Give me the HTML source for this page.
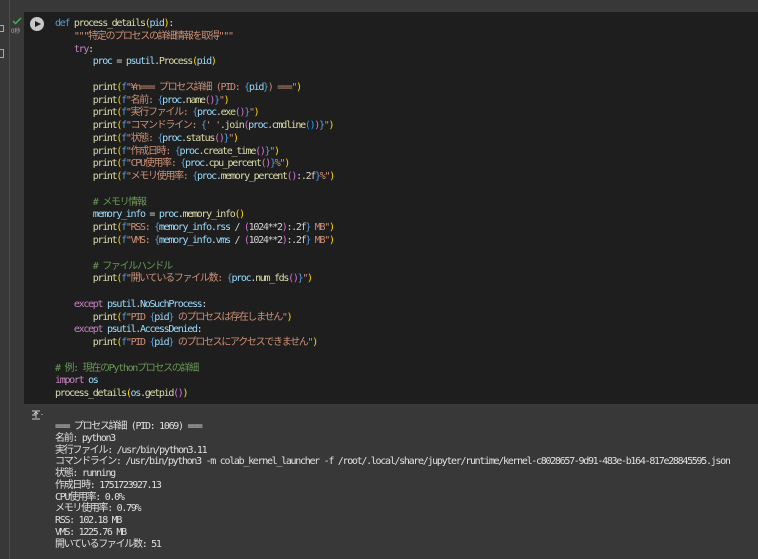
<!DOCTYPE html>
<html><head><meta charset="utf-8"><style>
body{margin:0;width:758px;height:559px;background:#383838;overflow:hidden;position:relative;font-family:"Liberation Mono","Noto Sans CJK JP",monospace;}
.gut{position:absolute;left:9px;top:0;width:1px;height:559px;background:#4d4d4d}
.cell{position:absolute;left:24px;top:12px;width:734px;height:392px;background:#1e1e1e}
pre{margin:0;position:absolute;font-size:10px;letter-spacing:-1.3px;line-height:12.76px;white-space:pre;}
.code{left:55px;top:18px;color:#d4d4d4}
.out{left:55px;top:421px;color:#e0e0e0;line-height:11.75px}
.k{color:#569cd6}.f{color:#dcdcaa}.p{color:#c586c0}.s{color:#ce9178}.c{color:#6a9955}.v{color:#9cdcfe}
.b1{color:#ffd700}.b2{color:#da70d6}.b3{color:#179fff}.e{color:#569cd6}
.run{position:absolute;left:30px;top:17px;width:14px;height:14px;border-radius:50%;background:#c8c8c8}
.run:after{content:"";position:absolute;left:5px;top:3.5px;border-left:6px solid #1e1e1e;border-top:3.5px solid transparent;border-bottom:3.5px solid transparent}
</style></head><body>
<div class="gut"></div>
<div class="cell"></div>
<svg style="position:absolute;left:12px;top:17px" width="10" height="8"><path d="M1 4 L3.5 6.5 L9 1" stroke="#3fb950" stroke-width="1.4" fill="none"/></svg>
<div style="position:absolute;left:11px;top:26px;font-size:6px;color:#aaa;font-family:'Noto Sans CJK JP',sans-serif">0秒</div>
<div style="position:absolute;left:0;top:25px;width:3px;height:5px;border:1px solid #aaa;border-left:none"></div>
<div style="position:absolute;left:0;top:49px;width:3px;height:7px;border:1px solid #aaa;border-left:none"></div>
<div class="run"></div>
<svg style="position:absolute;left:31px;top:409px" width="14" height="12"><path d="M1 2H9M1 6H5M1 10H9M5 3V9M3 5L5 3L7 5" stroke="#ccc" stroke-width="1" fill="none"/><path d="M10 5L12 5L11 6Z" fill="#ccc"/></svg>
<pre class="code"><span class="k">def</span> <span class="f">process_details</span><span class="b1">(</span><span class="v">pid</span><span class="b1">)</span>:
    <span class="s">"""特定のプロセスの詳細情報を取得"""</span>
    <span class="p">try</span>:
        <span class="v">proc</span> = <span class="v">psutil</span>.<span class="f">Process</span><span class="b1">(</span><span class="v">pid</span><span class="b1">)</span>

        <span class="f">print</span><span class="b1">(</span><span class="k">f</span><span class="s">"¥n=== プロセス詳細 (PID: </span><span class="e">{</span><span class="v">pid</span><span class="e">}</span><span class="s">) ==="</span><span class="b1">)</span>
        <span class="f">print</span><span class="b1">(</span><span class="k">f</span><span class="s">"名前: </span><span class="e">{</span><span class="v">proc</span>.<span class="f">name</span><span class="b2">()</span><span class="e">}</span><span class="s">"</span><span class="b1">)</span>
        <span class="f">print</span><span class="b1">(</span><span class="k">f</span><span class="s">"実行ファイル: </span><span class="e">{</span><span class="v">proc</span>.<span class="f">exe</span><span class="b2">()</span><span class="e">}</span><span class="s">"</span><span class="b1">)</span>
        <span class="f">print</span><span class="b1">(</span><span class="k">f</span><span class="s">"コマンドライン: </span><span class="e">{</span><span class="s">' '</span>.<span class="f">join</span><span class="b2">(</span><span class="v">proc</span>.<span class="f">cmdline</span><span class="b3">()</span><span class="b2">)</span><span class="e">}</span><span class="s">"</span><span class="b1">)</span>
        <span class="f">print</span><span class="b1">(</span><span class="k">f</span><span class="s">"状態: </span><span class="e">{</span><span class="v">proc</span>.<span class="f">status</span><span class="b2">()</span><span class="e">}</span><span class="s">"</span><span class="b1">)</span>
        <span class="f">print</span><span class="b1">(</span><span class="k">f</span><span class="s">"作成日時: </span><span class="e">{</span><span class="v">proc</span>.<span class="f">create_time</span><span class="b2">()</span><span class="e">}</span><span class="s">"</span><span class="b1">)</span>
        <span class="f">print</span><span class="b1">(</span><span class="k">f</span><span class="s">"CPU使用率: </span><span class="e">{</span><span class="v">proc</span>.<span class="f">cpu_percent</span><span class="b2">()</span><span class="e">}</span><span class="s">%"</span><span class="b1">)</span>
        <span class="f">print</span><span class="b1">(</span><span class="k">f</span><span class="s">"メモリ使用率: </span><span class="e">{</span><span class="v">proc</span>.<span class="f">memory_percent</span><span class="b2">()</span>:.2f<span class="e">}</span><span class="s">%"</span><span class="b1">)</span>

        <span class="c"># メモリ情報</span>
        <span class="v">memory_info</span> = <span class="v">proc</span>.<span class="f">memory_info</span><span class="b1">()</span>
        <span class="f">print</span><span class="b1">(</span><span class="k">f</span><span class="s">"RSS: </span><span class="e">{</span><span class="v">memory_info</span>.<span class="v">rss</span> / <span class="b2">(</span>1024**2<span class="b2">)</span>:.2f<span class="e">}</span><span class="s"> MB"</span><span class="b1">)</span>
        <span class="f">print</span><span class="b1">(</span><span class="k">f</span><span class="s">"VMS: </span><span class="e">{</span><span class="v">memory_info</span>.<span class="v">vms</span> / <span class="b2">(</span>1024**2<span class="b2">)</span>:.2f<span class="e">}</span><span class="s"> MB"</span><span class="b1">)</span>

        <span class="c"># ファイルハンドル</span>
        <span class="f">print</span><span class="b1">(</span><span class="k">f</span><span class="s">"開いているファイル数: </span><span class="e">{</span><span class="v">proc</span>.<span class="f">num_fds</span><span class="b2">()</span><span class="e">}</span><span class="s">"</span><span class="b1">)</span>

    <span class="p">except</span> <span class="v">psutil</span>.<span class="v">NoSuchProcess</span>:
        <span class="f">print</span><span class="b1">(</span><span class="k">f</span><span class="s">"PID </span><span class="e">{</span><span class="v">pid</span><span class="e">}</span><span class="s"> のプロセスは存在しません"</span><span class="b1">)</span>
    <span class="p">except</span> <span class="v">psutil</span>.<span class="v">AccessDenied</span>:
        <span class="f">print</span><span class="b1">(</span><span class="k">f</span><span class="s">"PID </span><span class="e">{</span><span class="v">pid</span><span class="e">}</span><span class="s"> のプロセスにアクセスできません"</span><span class="b1">)</span>

<span class="c"># 例: 現在のPythonプロセスの詳細</span>
<span class="p">import</span> <span class="v">os</span>
<span class="f">process_details</span><span class="b1">(</span><span class="v">os</span>.<span class="f">getpid</span><span class="b2">()</span><span class="b1">)</span></pre>
<pre class="out">=== プロセス詳細 (PID: 1069) ===
名前: python3
実行ファイル: /usr/bin/python3.11
コマンドライン: /usr/bin/python3 -m colab_kernel_launcher -f /root/.local/share/jupyter/runtime/kernel-c8028657-9d91-483e-b164-817e28845595.json
状態: running
作成日時: 1751723927.13
CPU使用率: 0.0%
メモリ使用率: 0.79%
RSS: 102.18 MB
VMS: 1225.76 MB
開いているファイル数: 51</pre>
</body></html>
